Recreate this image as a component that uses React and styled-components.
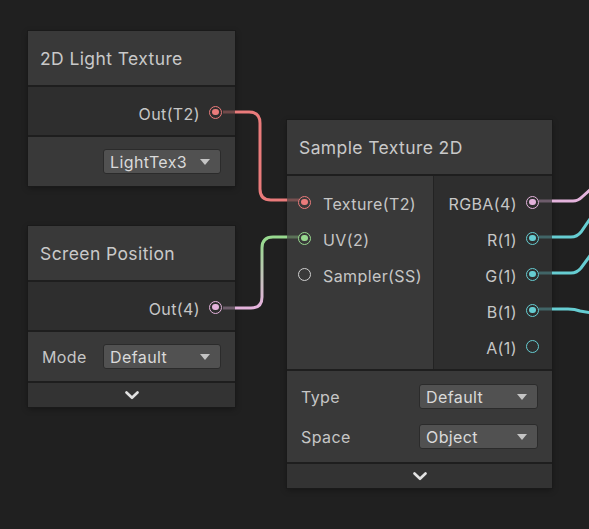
import React from "react";
import styled, { createGlobalStyle } from "styled-components";

const GlobalStyle = createGlobalStyle`
  html, body { margin: 0; padding: 0; background: #202020; }
  body { font-family: Inter, "Noto Sans", "Liberation Sans", sans-serif; }
  * { box-sizing: border-box; }
`;

const Canvas = styled.div`
  position: relative;
  width: 589px;
  height: 529px;
  background: #202020;
  overflow: hidden;
`;

const NodeBox = styled.div`
  position: absolute;
  left: ${(p) => p.$x}px;
  top: ${(p) => p.$y}px;
  width: ${(p) => p.$w}px;
  display: flex;
  flex-direction: column;
  background: #1e1e1e;
  box-shadow: 0 0 0 1px #1a1a1a, 0 2px 6px rgba(0, 0, 0, 0.35);
`;

const Title = styled.div`
  height: 54px;
  display: flex;
  align-items: center;
  padding: 1px 0 0 12px;
  background: #393939;
  color: #c9c9c9;
  font-size: 17.5px;
  letter-spacing: 0.4px;
`;

const PortArea = styled.div`
  display: flex;
  margin-top: 2px;
  background: #2e2e2e;
`;

const PortColumn = styled.div`
  flex: ${(p) => (p.$grow ? 1 : "none")};
  width: ${(p) => (p.$w ? `${p.$w}px` : "auto")};
  display: flex;
  flex-direction: column;
  align-items: ${(p) => (p.$side === "in" ? "flex-start" : "flex-end")};
  padding: ${(p) => p.$pt}px ${(p) => (p.$side === "in" ? 0 : 13)}px ${(p) => p.$pb}px
    ${(p) => (p.$side === "in" ? 11 : 0)}px;
  background: ${(p) => (p.$side === "in" ? "#393939" : "#2e2e2e")};
  border-left: ${(p) => (p.$divider ? "1px solid #232323" : "none")};
`;

const PortRow = styled.div`
  height: 36px;
  display: flex;
  align-items: center;
  gap: ${(p) => (p.$side === "in" ? 12 : 9)}px;
  flex-direction: ${(p) => (p.$side === "in" ? "row" : "row-reverse")};
  color: #c6c6c6;
  font-size: 16px;
  letter-spacing: 0.4px;
`;

const Label = styled.span`
  padding-top: 3px;
`;

const Dot = styled.span`
  width: 13px;
  height: 13px;
  flex: none;
  border-radius: 50%;
  border: 1.7px solid ${(p) => p.$c};
  display: flex;
  align-items: center;
  justify-content: center;
  &::after {
    content: "";
    width: 6.5px;
    height: 6.5px;
    border-radius: 50%;
    background: ${(p) => (p.$on ? p.$c : "transparent")};
  }
`;

const Controls = styled.div`
  margin-top: 2px;
  background: #393939;
  display: flex;
  flex-direction: column;
  gap: 15px;
  padding: ${(p) => p.$py}px 14px;
`;

const ControlRow = styled.div`
  height: 25px;
  display: flex;
  align-items: center;
  justify-content: ${(p) => (p.$label ? "space-between" : "flex-end")};
  color: #c6c6c6;
  font-size: 16px;
  letter-spacing: 0.4px;
`;

const Select = styled.div`
  width: ${(p) => p.$w}px;
  height: 25px;
  display: flex;
  align-items: center;
  justify-content: space-between;
  padding: 0 10px 0 6px;
  background: #515151;
  border: 1px solid #2b2b2b;
  border-radius: 3px;
  color: #dadada;
  font-size: 16px;
  letter-spacing: 0.4px;
`;

const Caret = styled.span`
  width: 0;
  height: 0;
  border-left: 5.5px solid transparent;
  border-right: 5.5px solid transparent;
  border-top: 6px solid #c4c4c4;
`;

const Expander = styled.div`
  margin-top: 2px;
  height: 24px;
  background: #333333;
  display: flex;
  align-items: center;
  justify-content: center;
`;

const Wires = styled.svg`
  position: absolute;
  left: 0;
  top: 0;
  pointer-events: none;
`;

const C = {
  red: "#ea7b7b",
  pink: "#e4b3dc",
  green: "#98d98f",
  cyan: "#66cdd2",
  grey: "#cfcfcf",
};

const Chevron = () => (
  <svg width="14" height="9" viewBox="0 0 14 9">
    <polyline points="1.5,1.5 7,6.8 12.5,1.5" fill="none" stroke="#e2e2e2" strokeWidth="2.6" strokeLinecap="round" strokeLinejoin="round" />
  </svg>
);

const Port = ({ side, label, color, on }) => (
  <PortRow $side={side}>
    <Dot $c={color} $on={on} />
    <Label>{label}</Label>
  </PortRow>
);

const Dropdown = ({ w, value }) => (
  <Select $w={w}>
    <span>{value}</span>
    <Caret />
  </Select>
);

export default function App() {
  return (
    <>
      <GlobalStyle />
      <Canvas>
        <NodeBox $x={28} $y={31} $w={207}>
          <Title>2D Light Texture</Title>
          <PortArea>
            <PortColumn $grow $side="out" $pt={7} $pb={5}>
              <Port side="out" label="Out(T2)" color={C.red} on />
            </PortColumn>
          </PortArea>
          <Controls $py={12}>
            <ControlRow>
              <Dropdown w={118} value="LightTex3" />
            </ControlRow>
          </Controls>
        </NodeBox>

        <NodeBox $x={28} $y={226} $w={207}>
          <Title>Screen Position</Title>
          <PortArea>
            <PortColumn $grow $side="out" $pt={7} $pb={5}>
              <Port side="out" label="Out(4)" color={C.pink} on />
            </PortColumn>
          </PortArea>
          <Controls $py={12}>
            <ControlRow $label>
              <span>Mode</span>
              <Dropdown w={118} value="Default" />
            </ControlRow>
          </Controls>
          <Expander>
            <Chevron />
          </Expander>
        </NodeBox>

        <NodeBox $x={287} $y={120} $w={265}>
          <Title>Sample Texture 2D</Title>
          <PortArea>
            <PortColumn $w={146} $side="in" $pt={8} $pb={5}>
              <Port side="in" label="Texture(T2)" color={C.red} on />
              <Port side="in" label="UV(2)" color={C.green} on />
              <Port side="in" label="Sampler(SS)" color={C.grey} />
            </PortColumn>
            <PortColumn $grow $divider $side="out" $pt={8} $pb={5}>
              <Port side="out" label="RGBA(4)" color={C.pink} on />
              <Port side="out" label="R(1)" color={C.cyan} on />
              <Port side="out" label="G(1)" color={C.cyan} on />
              <Port side="out" label="B(1)" color={C.cyan} on />
              <Port side="out" label="A(1)" color={C.cyan} />
            </PortColumn>
          </PortArea>
          <Controls $py={13}>
            <ControlRow $label>
              <span>Type</span>
              <Dropdown w={119} value="Default" />
            </ControlRow>
            <ControlRow $label>
              <span>Space</span>
              <Dropdown w={119} value="Object" />
            </ControlRow>
          </Controls>
          <Expander>
            <Chevron />
          </Expander>
        </NodeBox>

        <Wires width="589" height="529" viewBox="0 0 589 529">
          <defs>
            <linearGradient id="pg" gradientUnits="userSpaceOnUse" x1="0" y1="305" x2="0" y2="242">
              <stop offset="0" stopColor={C.pink} />
              <stop offset="1" stopColor={C.green} />
            </linearGradient>
          </defs>
          <g strokeWidth="3" opacity="0.35">
            <line x1="223" y1="112" x2="235" y2="112" stroke={C.red} />
            <line x1="223" y1="308" x2="235" y2="308" stroke={C.pink} />
            <line x1="287" y1="200" x2="299" y2="200" stroke={C.red} />
            <line x1="287" y1="237" x2="299" y2="237" stroke={C.green} />
            <line x1="539" y1="201" x2="552" y2="201" stroke={C.pink} />
            <line x1="539" y1="237" x2="552" y2="237" stroke={C.cyan} />
            <line x1="539" y1="273" x2="552" y2="273" stroke={C.cyan} />
            <line x1="539" y1="309" x2="552" y2="309" stroke={C.cyan} />
          </g>
          <g fill="none" strokeWidth="3" strokeLinecap="butt">
            <path d="M235 112 L249 112 Q260 112 260 123 L260 189 Q260 200 271 200 L287 200" stroke={C.red} />
            <path d="M235 308 L251 308 Q262 308 262 297 L262 248 Q262 237 273 237 L287 237" stroke="url(#pg)" />
            <path d="M552 201 L573 201 Q578 201 582 197 L592 188" stroke={C.pink} />
            <path d="M552 237 L571 237 Q577 237 581 232 L592 216" stroke={C.cyan} />
            <path d="M552 273 L571 273 Q577 273 581 268 L592 253" stroke={C.cyan} />
            <path d="M552 309 L568 309 Q575 309 580 311 L592 313" stroke={C.cyan} />
          </g>
        </Wires>
      </Canvas>
    </>
  );
}
